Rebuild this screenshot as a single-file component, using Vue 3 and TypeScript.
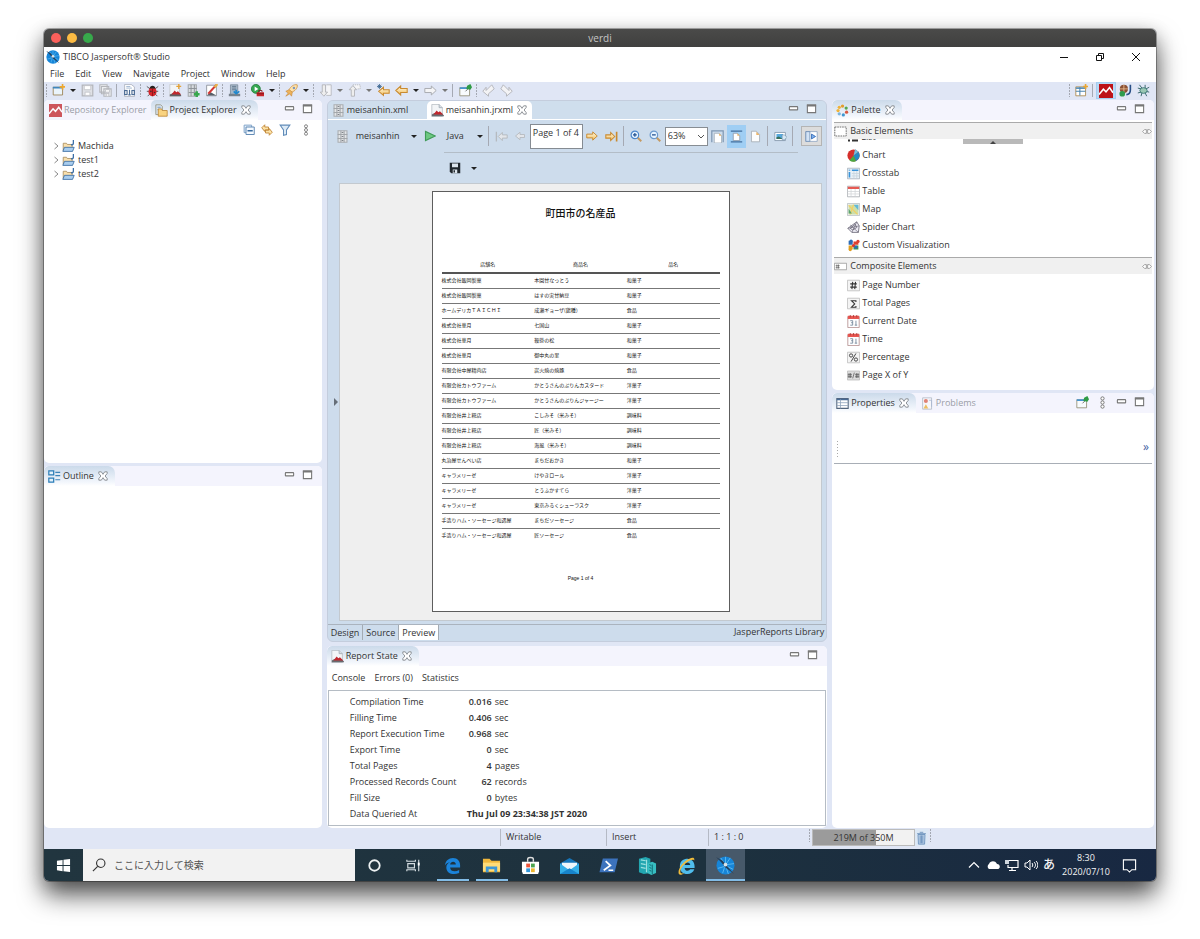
<script setup lang="ts">
import { ref } from 'vue'

interface ToolItem {
  kind: 'icon' | 'caret' | 'grip' | 'sep'
  icon?: string
  label?: string
  dim?: boolean
}
interface PaletteItem {
  icon: string
  label: string
}

const grip: ToolItem = { kind: 'grip' }
const sep: ToolItem = { kind: 'sep' }
const caret: ToolItem = { kind: 'caret' }
const dimCaret: ToolItem = { kind: 'caret', dim: true }
const tool = (icon: string, label: string): ToolItem => ({ kind: 'icon', icon, label })

const mainTools: ToolItem[] = [
  grip, tool('new', 'New'), caret, tool('save', 'Save'), tool('saveall', 'Save All'), sep,
  tool('binary', 'Build'), grip, tool('bug', 'Debug'), grip,
  tool('newreport', 'New report'), tool('serveradd', 'Add server'), tool('edit', 'Edit'), grip,
  tool('device', 'Deploy'), grip, tool('run', 'Run'), caret, grip,
  tool('rocket', 'Launch'), caret, grip,
  tool('annodown', 'Next annotation'), dimCaret, tool('annoup', 'Previous annotation'), dimCaret,
  tool('backstar', 'Last edit location'), tool('back', 'Back'), caret, tool('fwddim', 'Forward'), dimCaret, sep,
  tool('pin', 'Pin editor'), grip, tool('undo', 'Undo'), tool('redo', 'Redo'),
]

const menus = ['File', 'Edit', 'View', 'Navigate', 'Project', 'Window', 'Help']
const projects = ['Machida', 'test1', 'test2']

const basicItems: PaletteItem[] = [
  { icon: 'piechart', label: 'Chart' },
  { icon: 'crosstab', label: 'Crosstab' },
  { icon: 'table', label: 'Table' },
  { icon: 'map', label: 'Map' },
  { icon: 'spider', label: 'Spider Chart' },
  { icon: 'custom', label: 'Custom Visualization' },
]
const compositeItems: PaletteItem[] = [
  { icon: 'hash', label: 'Page Number' },
  { icon: 'sigma', label: 'Total Pages' },
  { icon: 'calendar', label: 'Current Date' },
  { icon: 'calendar', label: 'Time' },
  { icon: 'percent', label: 'Percentage' },
  { icon: 'xofy', label: 'Page X of Y' },
]

const products: [string, string, string][] = [
  ['株式会社飯岡製菓', '本園甘なっとう', '和菓子'],
  ['株式会社飯岡製菓', 'はすの実甘納豆', '和菓子'],
  ['ホームデリカＴＡＩＣＨＩ', '成瀬ギョーザ(鶏種）', '食品'],
  ['株式会社華月', '七国山', '和菓子'],
  ['株式会社華月', '鞍掛の松', '和菓子'],
  ['株式会社華月', '御中丸の里', '和菓子'],
  ['有限会社中屋精肉店', '炭火焼の焼豚', '食品'],
  ['有限会社カトウファーム', 'かとうさんのぷりんカスタード', '洋菓子'],
  ['有限会社カトウファーム', 'かとうさんのぷりんジャージー', '洋菓子'],
  ['有限会社井上糀店', 'こしみそ（米みそ）', '調味料'],
  ['有限会社井上糀店', '匠（米みそ）', '調味料'],
  ['有限会社井上糀店', '海風（米みそ）', '調味料'],
  ['丸治屋せんべい店', 'まちだおかき', '和菓子'],
  ['キャラメリーゼ', 'けやきロール', '洋菓子'],
  ['キャラメリーゼ', 'とうふかすてら', '洋菓子'],
  ['キャラメリーゼ', '東京みるくシューラスク', '洋菓子'],
  ['手造りハム・ソーセージ和遇屋', 'まちだソーセージ', '食品'],
  ['手造りハム・ソーセージ和遇屋', '匠ソーセージ', '食品'],
]

const stats: [string, string, string][] = [
  ['Compilation Time', '0.016', 'sec'],
  ['Filling Time', '0.406', 'sec'],
  ['Report Execution Time', '0.968', 'sec'],
  ['Export Time', '0', 'sec'],
  ['Total Pages', '4', 'pages'],
  ['Processed Records Count', '62', 'records'],
  ['Fill Size', '0', 'bytes'],
]

const tasks = [
  { icon: 'cortana', label: 'Cortana', state: '' },
  { icon: 'taskview', label: 'Task View', state: '' },
  { icon: 'edge', label: 'Edge', state: 'open' },
  { icon: 'explorer', label: 'File Explorer', state: 'open' },
  { icon: 'store', label: 'Store', state: '' },
  { icon: 'mail', label: 'Mail', state: '' },
  { icon: 'shell', label: 'PowerShell', state: '' },
  { icon: 'servers', label: 'Server Manager', state: '' },
  { icon: 'ie', label: 'Internet Explorer', state: '' },
  { icon: 'jasper', label: 'Jaspersoft Studio', state: 'active' },
]

const pageText = ref('Page 1 of 4')
const zoom = ref('63%')
const search = ref('')
const usedMemory = 219
const totalMemory = 350
</script>

<template>
  <div class="desktop">
    <svg class="sprite" aria-hidden="true">
      <linearGradient id="gold" x1="0" y1="0" x2="0" y2="1"><stop offset="0" stop-color="#fffbe6" /><stop offset="1" stop-color="#f2bd5c" /></linearGradient>
      <symbol id="jasper" viewBox="0 0 20 20"><circle cx="10" cy="10" r="9.500" fill="#1685d8" /><path d="M5 2l4 6M10 1v7M15 2l-4 6M2 13l7-2M19 8l-7 1M18 14l-6-3M13 19l-2-6M7 18l2-6" stroke="#5ab6ee" fill="none" /><path d="M0 1l7 4 5 6 7 8-9-7-5-6z" fill="#263e58" /><circle cx="10" cy="9" r="2" fill="#d9e4ea" /></symbol>
      <symbol id="close" viewBox="0 0 12 12"><path d="M1 1h3l2 3 2-3h3v2L8.500 6 11 9v2H8L6 8l-2 3H1V9l2.500-3L1 3z" fill="#fff" stroke="#7b7f85" /></symbol>
      <symbol id="min" viewBox="0 0 12 12"><rect x="1.500" y="4" width="9" height="3.500" rx=".5" fill="#fff" stroke="#777" stroke-width="1.200" /></symbol>
      <symbol id="max" viewBox="0 0 12 12"><path d="M1.500 2h9v8.500h-9z" fill="#fff" stroke="#777" stroke-width="1.200" /><path d="M1 3h10" stroke="#777" stroke-width="1.500" /></symbol>
      <symbol id="dots" viewBox="0 0 12 16"><g fill="#fff" stroke="#777" stroke-width="1.200"><circle cx="6" cy="3" r="2" /><circle cx="6" cy="8" r="2" /><circle cx="6" cy="13" r="2" /></g></symbol>
      <symbol id="new" viewBox="0 0 16 16"><path d="M1.500 4h11.500v9.500H1.500z" fill="#eaf4fb" stroke="#967b48" /><path d="M1 4.500h12" stroke="#3f86be" stroke-width="2" /><path d="M13 0v7M9.500 3.500h7" stroke="#eea82f" stroke-width="2" /></symbol>
      <symbol id="save" viewBox="0 0 16 16"><path d="M1.500 1.500h13v13h-13z" fill="#dfe1e6" stroke="#b4b6bb" stroke-width="1.500" /><path d="M4 2h8v5H4zM5 10h6v4H5z" fill="#fff" stroke="#c0c2c6" /></symbol>
      <symbol id="saveall" viewBox="0 0 16 16"><path d="M1 1h9v9H1zM3 3h9v9H3zM6 6h9v9H6z" fill="#eceef1" stroke="#b4b6bb" stroke-width="1.300" /><path d="M8 7h5v3H8zM9 12h3v3H9z" fill="#fff" stroke="#c0c2c6" /></symbol>
      <symbol id="binary" viewBox="0 0 16 16"><path d="M2 .5h8l4 3v12H2z" fill="#fff" stroke="#a9aebb" /><path d="M4 3h5M4 5h7" stroke="#8fa9c8" /><g fill="none" stroke="#4b6b95" stroke-width="1.400"><rect x="2" y="8" width="3" height="5" /><path d="M8 7v6M6.500 13.300h3" /><rect x="11" y="8" width="3" height="5" /></g></symbol>
      <symbol id="bug" viewBox="0 0 16 16"><path d="M1 3l4 3M1 9h14M2 15l4-4M15 3l-4 3M14 15l-4-4" stroke="#444" /><ellipse cx="8" cy="9.500" rx="5" ry="5.500" fill="#d6252b" /><path d="M4.500 5.500C4.500 1 11.500 1 11.500 5.500z" fill="#27211f" /><path d="M8 6v9" stroke="#8a1015" /><circle cx="6" cy="9" r="1" fill="#333" /><circle cx="10.500" cy="10.500" r="1" fill="#333" /></symbol>
      <symbol id="report" viewBox="0 0 16 16"><path d="M1 .5h9l4 4v11H1z" fill="#f3f5f7" stroke="#b6bcc3" /><path d="M10 .5v4h4" fill="#d8dfe6" stroke="#a0a9b2" /><path d="M1 15v-2l3-2h9l3 3v1z" fill="#696c71" /><path d="M3 13l4-5 2 2 2-1 4 4z" fill="#c1272d" /></symbol>
      <symbol id="newreport" viewBox="0 0 16 16"><path d="M1 .5h12v15H1z" fill="#f3f5f7" stroke="#c6c9cc" /><path d="M1 15v-2l4-2h8l2 3v1z" fill="#5e6166" /><path d="M3 13l4-5 2 2 2-1 4 4z" fill="#c1272d" /><path d="M12 0v6M9 3h6" stroke="#e5a236" stroke-width="1.600" /></symbol>
      <symbol id="server" viewBox="0 0 16 16"><path d="M2.500 1h11v14h-11z" fill="#e3e5e7" stroke="#aaaeb2" stroke-width="1.300" /><path d="M2 5.500h12M2 10.500h12M6 1v14M10 1v14" stroke="#a0a5a9" stroke-width="1.200" /><path d="M7 3h2M7 8h2M7 13h2" stroke="#60666c" /></symbol>
      <symbol id="serveradd" viewBox="0 0 16 16"><path d="M1.500 1h10v14h-10z" fill="#d9dde1" stroke="#a5a9ad" stroke-width="1.300" /><path d="M2 5.500h10M2 10.500h10M5 1v14M9 1v14" stroke="#8c9298" stroke-width="1.200" /><path d="M12 9v7M8.500 12.500h7" stroke="#37a74d" stroke-width="3" /></symbol>
      <symbol id="edit" viewBox="0 0 16 16"><path d="M2 1.500h12v13H2z" fill="#fff" stroke="#858b95" /><path d="M2 14l5-4 7 4z" fill="#575e68" /><path d="M14 1L4 12" stroke="#d13736" stroke-width="2.500" /><path d="M15 0l-3 4" stroke="#e6b04a" stroke-width="3" /></symbol>
      <symbol id="device" viewBox="0 0 16 16"><path d="M3 1h9v12H3z" fill="#a7b8c8" stroke="#7b8b9b" /><path d="M5 3h5M5 5h5M5 7h5" stroke="#5f748a" /><path d="M1 12h14v3H1z" fill="#78828c" /><path d="M10 7v5M7 9l3 3 4-3" stroke="#2188cd" stroke-width="2" fill="none" /></symbol>
      <symbol id="run" viewBox="0 0 16 16"><circle cx="6" cy="6" r="5.500" fill="#36a852" stroke="#207a39" /><path d="M4.500 3v6L9 6z" fill="#fff" /><path d="M7 10h9v5H7z" fill="#c9252b" /><path d="M9.500 10V8h4v2M7 12h9" stroke="#7f1519" fill="none" /></symbol>
      <symbol id="rocket" viewBox="0 0 16 16"><path d="M15 1C11 0 7 3 5 7l3 3c4-1 8-5 7-9z" fill="#ffe2a8" stroke="#cf9546" /><path d="M5 7L1 9l3 2-3 4 5-3 2 3 1-5z" fill="#efb459" stroke="#c98c3f" stroke-width=".8" /><circle cx="11" cy="5" r="1.500" fill="#8298b8" /></symbol>
      <symbol id="annodown" viewBox="0 0 16 16"><path d="M9 1h6v13H9" fill="#f5f5f7" stroke="#b3b5ba" /><path d="M4 1v9H1.500L6 15l4.500-5H8V1z" fill="#eee" stroke="#acaeb2" /></symbol>
      <symbol id="annoup" viewBox="0 0 16 16"><path d="M6 1h9v5h-4" fill="#f5f5f7" stroke="#b3b5ba" stroke-dasharray="1.500 1" /><path d="M4 15V7H1.500L6 2l4.500 5H8v8z" fill="#eee" stroke="#acaeb2" /></symbol>
      <symbol id="back" viewBox="0 0 16 16"><path d="M1 8l6-5.500v3h8v5H7v3z" fill="url(#gold)" stroke="#c98a30" stroke-width="1.300" /></symbol>
      <symbol id="backstar" viewBox="0 0 16 16"><path d="M2 9l6-5v3h7v4.500H8V14z" fill="url(#gold)" stroke="#c98a30" stroke-width="1.300" /><path d="M3 0v6M0 3h6M1 1l4 4M5 1L1 5" stroke="#35618c" /></symbol>
      <symbol id="fwd" viewBox="0 0 16 16"><path d="M15 8L9 2.500v3H1v5h8v3z" fill="url(#gold)" stroke="#c98a30" stroke-width="1.300" /></symbol>
      <symbol id="last" viewBox="0 0 16 16"><path d="M12 8L7 3v3H1v4h6v3z" fill="url(#gold)" stroke="#c98a30" stroke-width="1.300" /><path d="M14.300 2v12" stroke="#c98a30" stroke-width="2" /></symbol>
      <symbol id="fwddim" viewBox="0 0 16 16"><path d="M15 8L9 2.500v3H1v5h8v3z" fill="#f4f4f6" stroke="#a9abb0" stroke-width="1.200" /></symbol>
      <symbol id="backdim" viewBox="0 0 16 16"><path d="M2 8l6-5v3h6v4H8v3z" fill="#e3e6ea" stroke="#b5babf" stroke-width="1.200" /></symbol>
      <symbol id="firstdim" viewBox="0 0 16 16"><path d="M4 8l5-5v3h6v4H9v3z" fill="#e3e6ea" stroke="#b5babf" stroke-width="1.200" /><path d="M1.700 2v12" stroke="#b5babf" stroke-width="1.600" /></symbol>
      <symbol id="pin" viewBox="0 0 16 16"><path d="M1 4.500h12v10H1z" fill="#f8fbfd" stroke="#8e8a70" /><path d="M1 5h12" stroke="#4795d0" stroke-width="2" /><path d="M8 9l3-3" stroke="#555" /><path d="M10 2l4-2 2 4-2 3-5-1z" fill="#2f9b45" /></symbol>
      <symbol id="undo" viewBox="0 0 16 16"><path d="M12 1l3 5-7 6v3L1 9l4-5v4z" fill="#f3f3f5" stroke="#acaeb3" /></symbol>
      <symbol id="redo" viewBox="0 0 16 16"><path d="M4 1L1 6l7 6v3l7-6-4-5v4z" fill="#f3f3f5" stroke="#acaeb3" /></symbol>
      <symbol id="perspective" viewBox="0 0 16 16"><path d="M1 3.500h12v11H1z" fill="#fff" stroke="#a78244" /><path d="M1 5h12" stroke="#5e93bb" stroke-width="2" /><path d="M1 9h12M6 4v10" stroke="#4b85b0" stroke-width="1.300" /><path d="M13 0v6M10 3h6" stroke="#eaa633" stroke-width="2" /></symbol>
      <symbol id="repo" viewBox="0 0 16 16"><path d="M0 0h16v16H0z" fill="#bd1218" /><path d="M0 12l5-6 3 3 4-5 4 6" fill="none" stroke="#fff" stroke-width="1.800" /></symbol>
      <symbol id="java" viewBox="0 0 16 16"><circle cx="6" cy="6" r="5" fill="#8b5135" /><path d="M1 6h10M6 1v10" stroke="#efc195" /><circle cx="4" cy="12" r="3.500" fill="#2f9b4d" /><path d="M14 1v6c0 4-2 6-5 6" fill="none" stroke="#284f86" stroke-width="2" /></symbol>
      <symbol id="debug" viewBox="0 0 16 16"><path d="M1 5l4 1M3 1l3 4M10 1v4M15 4l-4 2M15 10l-4-1M12 15l-2-4M5 15l1-4M1 11l4-1" stroke="#3e6a70" stroke-width="1.200" /><ellipse cx="8" cy="8" rx="4.500" ry="3.500" fill="#9ac8b4" stroke="#2e6d6c" /></symbol>
      <symbol id="projtab" viewBox="0 0 16 16"><path d="M1 1h6l2 2v10H1z" fill="#dae7f4" stroke="#8f8f7c" /><path d="M3 4h4M3 7h3" stroke="#6a8db2" /><path d="M4 6h4l1 2h6v7H4z" fill="#f8d380" stroke="#bd8532" /></symbol>
      <symbol id="folder" viewBox="0 0 16 16"><path d="M1.500 13V4h4l1 1.500h6V13z" fill="#fae0ac" stroke="#a58a5c" /><path d="M1 14l2-5h12l-2 5z" fill="#a8cdef" stroke="#35699f" /><path d="M14 0v4c0 2-1 2-3 2" stroke="#3b6fa7" stroke-width="1.600" fill="none" /></symbol>
      <symbol id="collapse" viewBox="0 0 16 16"><path d="M1.500 1.500h10v10h-10z" fill="#e7f2fb" stroke="#7fa4c8" stroke-width="1.300" /><path d="M4 4h11v10H4z" fill="#f5faff" stroke="#6089b4" stroke-width="1.300" /><path d="M6 9h7" stroke="#34689e" stroke-width="2" /></symbol>
      <symbol id="link" viewBox="0 0 16 16"><path d="M1 5l4-4v3h5v4H5v2zM15 11l-4 4v-3H6V8h5V6z" fill="#fde3a7" stroke="#c18736" stroke-width="1.200" /></symbol>
      <symbol id="filter" viewBox="0 0 16 16"><path d="M1.500 1.500h13L10 8v6l-4 1V8z" fill="#dceaf6" stroke="#608bb8" stroke-width="1.400" /></symbol>
      <symbol id="outline" viewBox="0 0 16 16"><g fill="#e4f1fa" stroke="#2a7db8" stroke-width="1.500"><path d="M1 1h6v5H1zM1 10h6v5H1z" /></g><path d="M9 3h6M9 7h3M12 7h3M9 12h6" stroke="#3c83b7" stroke-width="1.500" /></symbol>
      <symbol id="palette" viewBox="0 0 16 16"><circle cx="8" cy="2.500" r="2" fill="#e39d2b" /><circle cx="12.500" cy="5" r="2" fill="#57a850" /><circle cx="13" cy="10" r="2" fill="#d85840" /><circle cx="9" cy="13.500" r="2" fill="#4098d1" /><circle cx="4" cy="12" r="2" fill="#7bb5de" /><circle cx="2.500" cy="8" r="2" fill="#efb23a" /><circle cx="4" cy="4" r="2" fill="#efb23a" /></symbol>
      <symbol id="props" viewBox="0 0 16 16"><path d="M1 2h14v12H1z" fill="#fff" stroke="#53657c" stroke-width="1.300" /><path d="M1 3h14" stroke="#486b96" stroke-width="2" /><path d="M5.500 3v11M1 7h14M1 10.500h14" stroke="#91a5bd" /></symbol>
      <symbol id="problems" viewBox="0 0 16 16"><path d="M2 1h11v14H2z" fill="#f6f6fa" stroke="#b3bac8" /><circle cx="6" cy="5" r="2.500" fill="#e08275" /><path d="M6 9l3 5H3z" fill="#edbe62" /><path d="M10 4h3v8" stroke="#a9b7d1" fill="none" /></symbol>
      <symbol id="play" viewBox="0 0 16 16"><path d="M2 2v12l13-6z" fill="#6dc881" stroke="#3f9a57" stroke-width="1.500" /></symbol>
      <symbol id="zoomin" viewBox="0 0 16 16"><path d="M10 10l5 5" stroke="#c59a62" stroke-width="2.600" /><circle cx="6.500" cy="6.500" r="5" fill="#e5f3ff" stroke="#4c86cc" stroke-width="1.600" /><path d="M4 6.500h5M6.500 4v5" stroke="#214f90" stroke-width="1.600" /></symbol>
      <symbol id="zoomout" viewBox="0 0 16 16"><path d="M10 10l5 5" stroke="#c59a62" stroke-width="2.600" /><circle cx="6.500" cy="6.500" r="5" fill="#e5f3ff" stroke="#6b99ce" stroke-width="1.600" /><path d="M4 6.500h5" stroke="#214f90" stroke-width="1.600" /></symbol>
      <symbol id="fitwidth" viewBox="0 0 16 16"><path d="M1 15V1h14v14" fill="none" stroke="#7d96b3" stroke-width="1.500" /><path d="M4 4h6l3 3v9H4z" fill="#fff" stroke="#9fabb7" /><path d="M10 4l3 3h-3z" fill="#eab367" /></symbol>
      <symbol id="fitpage" viewBox="0 0 16 16"><path d="M1 1.500h14M1 14.500h14" stroke="#436f9d" stroke-width="1.500" /><path d="M4 4h5l3 3v6H4z" fill="#fff" stroke="#8b98a7" /><path d="M9 4l3 3H9z" fill="#eab367" /></symbol>
      <symbol id="actual" viewBox="0 0 16 16"><path d="M3 1.500h6l4 4v9H3z" fill="#fbfcfd" stroke="#a3aab2" /><path d="M9 2l4 4H9z" fill="#eab367" /></symbol>
      <symbol id="image" viewBox="0 0 16 16"><path d="M1 3h13v10H1z" fill="#fff" stroke="#7f93a8" /><path d="M3 5h8v6H3z" fill="#57a9dc" /><path d="M3 11V9l3-1 5 3z" fill="#376f5c" /><path d="M10 6h3l3 3-3 3h-3z" fill="#d6e8f4" stroke="#6688a4" stroke-width=".7" /></symbol>
      <symbol id="panel" viewBox="0 0 16 16"><path d="M1 2h14v12H1z" fill="#fff" stroke="#8da3c0" /><path d="M1 2h5v12H1z" fill="#d3e3f6" stroke="#6e8cb3" /><path d="M8 5v6l5-3z" fill="#7fb0ee" stroke="#3068b3" /></symbol>
      <symbol id="disk" viewBox="0 0 16 16"><path d="M1 1h14v14H3l-2-2z" fill="#20272d" /><path d="M4 2h8v5H4zM5 10h6v5H5z" fill="#dce5ed" /><path d="M6 11h2v3H6z" fill="#20272d" /></symbol>
      <symbol id="marquee" viewBox="0 0 16 16"><path d="M1 2.500h14v11H1z" fill="#fff" stroke="#555" stroke-dasharray="2 1" /></symbol>
      <symbol id="comp" viewBox="0 0 16 16"><path d="M.5 4h15v8H.5z" fill="#fff" stroke="#999" /><path d="M2 7h5M2 9.500h5M3.500 5.500v5M5.500 5.500v5" stroke="#555" stroke-width=".8" /></symbol>
      <symbol id="piechart" viewBox="0 0 16 16"><circle cx="8" cy="8" r="7.500" fill="#d52f2b" /><path d="M8 8l6-4.500A7.500 7.500 0 0 1 11 15z" fill="#238bc2" /><path d="M8 8l3 7a7.500 7.500 0 0 1-8-1z" fill="#4ba941" /><path d="M8 8l2-8 4 3.500z" fill="#71c1df" /></symbol>
      <symbol id="crosstab" viewBox="0 0 16 16"><path d="M.5 1.500h15v13H.5z" fill="#e8f1f7" stroke="#a5b0ba" /><path d="M6 3h8v2H6zM2 6h2v7H2z" fill="#3993d8" /><path d="M2 3h2v2H2z" fill="#7ab8e6" /><path d="M6 8h9M6 11h9M8.500 5v9M12 5v9" stroke="#c8d5df" /></symbol>
      <symbol id="table" viewBox="0 0 16 16"><path d="M.5 1.500h15v13H.5z" fill="#fff" stroke="#a7abb0" /><path d="M1 2h14v3H1z" fill="#e65a53" /><path d="M1 8h14M1 11h14M5 5v9M10 5v9" stroke="#d5d8da" /></symbol>
      <symbol id="map" viewBox="0 0 16 16"><path d="M.5 .5h15v15H.5z" fill="#f0f2f2" stroke="#b6bfc1" /><path d="M2 2h12v12H2z" fill="#cddfa8" /><path d="M8 2h6v7z" fill="#62b9d7" /><path d="M2 3l11 11M4 14l4-12" stroke="#f4cf63" stroke-width="1.500" /><path d="M2 7l4 6H2z" fill="#5ca373" /></symbol>
      <symbol id="spider" viewBox="0 0 16 16"><path d="M12 1l3 5-1 8-8 0-5-5zM10 4l2 4-5 3-3-2z" fill="#eeedf5" stroke="#686474" /><path d="M12 1L6 14M1 9l14-3M14 14L4 5" stroke="#686474" stroke-width=".8" /></symbol>
      <symbol id="custom" viewBox="0 0 16 16"><path d="M2 2h5v5H2z" fill="#2e6cb5" /><path d="M8 3h6v4H8z" fill="#db412f" /><path d="M2 8h5v5H2z" fill="#e09e20" /><path d="M8 8h6v5H8z" fill="#3e9a48" /><circle cx="5" cy="2.500" r="2" fill="#2e6cb5" /><circle cx="13.500" cy="3" r="2" fill="#db412f" /><circle cx="8" cy="8" r="2" fill="#d93730" /><circle cx="11" cy="10" r="2" fill="#286dba" /><circle cx="4" cy="13" r="2" fill="#e09e20" /></symbol>
      <symbol id="hash" viewBox="0 0 16 16"><path d="M.5 1.500h15v13H.5z" fill="#f4f4f4" stroke="#bbb" /><path d="M4 6h8M4 10h8M7 3.500L6 12.500M10.500 3.500l-1 9" stroke="#333" stroke-width="1.300" /></symbol>
      <symbol id="sigma" viewBox="0 0 16 16"><path d="M.5 1.500h15v13H.5z" fill="#f4f4f4" stroke="#bbb" /><path d="M11 6V4.500H5.500l4 4-4 4H11V11" fill="none" stroke="#333" stroke-width="1.300" /></symbol>
      <symbol id="calendar" viewBox="0 0 16 16"><path d="M1 2h14v13.500H1z" fill="#fff" stroke="#b08a8a" /><path d="M1 1h14v4H1z" fill="#e85752" /><path d="M4 0v3M8 0v3M12 0v3" stroke="#a83b38" /><path d="M4 7h3v5.500H4M5 9.500h2M11 7v5.500M9.500 12.500h3" fill="none" stroke="#6a7f94" /></symbol>
      <symbol id="percent" viewBox="0 0 16 16"><path d="M.5 1.500h15v13H.5z" fill="#f4f4f4" stroke="#bbb" /><path d="M11 3l-6 10" stroke="#444" stroke-width="1.200" /><g fill="none" stroke="#444" stroke-width="1.200"><circle cx="5" cy="5.500" r="2" /><circle cx="11" cy="10.500" r="2" /></g></symbol>
      <symbol id="xofy" viewBox="0 0 16 16"><path d="M.5 2.500h15v11H.5z" fill="#ddd" stroke="#bbb" /><path d="M1 7h5M1 9.500h5M2.500 5v6M4.500 5v6M9 4.500L7 11.500M10 7h5M10 9.500h5M11.500 5v6M13.500 5v6" stroke="#555" stroke-width=".9" /></symbol>
      <symbol id="drawer" viewBox="0 0 16 10"><path d="M7 2H4L1 5l3 3h3zM9 2h3l3 3-3 3H9z" fill="#fff" stroke="#888" stroke-width="1.200" /></symbol>
      <symbol id="trash" viewBox="0 0 12 16"><path d="M2 4h8l-.5 11h-7z" fill="#bcd2e9" stroke="#6a90bb" /><path d="M1 3h10M4 1.500h4M4.500 5v9M6 5v9M7.500 5v9" stroke="#6a90bb" /></symbol>
      <symbol id="windows" viewBox="0 0 16 16"><path d="M1 3l6-1v5.500H1zM8 1.800L15 1v6.500H8zM1 8.500h6V14l-6-1zM8 8.500h7V15l-7-.8z" fill="#fff" /></symbol>
      <symbol id="lens" viewBox="0 0 16 16"><circle cx="10" cy="6" r="4.800" fill="none" stroke="#333" stroke-width="1.300" /><path d="M6.500 9.500L1 15" stroke="#333" stroke-width="1.300" /></symbol>
      <symbol id="cortana" viewBox="0 0 20 20"><circle cx="10" cy="10" r="5.500" fill="none" stroke="#edf1f2" stroke-width="1.900" /></symbol>
      <symbol id="taskview" viewBox="0 0 20 20"><path d="M3 4v1.500h9V4M3 16v-1.500h9V16M4 8h7v4.500H4zM15.500 4v12" fill="none" stroke="#d5dde1" stroke-width="1.200" /><path d="M14.500 7h2v3h-2z" fill="#fff" /></symbol>
      <symbol id="edge" viewBox="0 0 20 20"><path d="M2 10C2.500 5 6 2 10.500 2c5 0 7.500 3.500 7.500 7.500v2.500H7.500c.2 4.500 5.500 5 9.500 2.700V18C10 20.500 3.500 18 3.500 12c0-3 1.500-4.500 4-5.500C4.500 7 2.700 8.200 2 10zM7.500 9h6c0-4-5.500-4-6 0z" fill="#1b83da" /></symbol>
      <symbol id="explorer" viewBox="0 0 20 20"><path d="M1 3h7l2 2h9v12H1z" fill="#efb73d" /><path d="M1 7h18v9H1z" fill="#ffdc78" /><path d="M4 17v-6h12v6h-3v-3H7v3z" fill="#3d97d6" /></symbol>
      <symbol id="store" viewBox="0 0 20 20"><path d="M7 6V3.500C7 1 13 1 13 3.500V6" fill="none" stroke="#ddd" stroke-width="1.500" /><path d="M1 6h18v10l-1 3H2l-1-3z" fill="#fff" /><path d="M5.500 8h4v4h-4z" fill="#ed553a" /><path d="M10.500 8h4v4h-4z" fill="#4ba44e" /><path d="M5.500 13h4v4h-4z" fill="#3298dc" /><path d="M10.500 13h4v4h-4z" fill="#edb731" /></symbol>
      <symbol id="mail" viewBox="0 0 20 20"><path d="M0 8l10-6 10 6v11H0z" fill="#1675ba" /><path d="M2 7h16v4l-8 5-8-5z" fill="#eef6fb" /><path d="M0 8l10 7 10-7v11H0z" fill="#35afe8" /><path d="M0 19l10-6 10 6z" fill="#1784cb" /></symbol>
      <symbol id="shell" viewBox="0 0 20 20"><path d="M4 2.500h16L16.500 17H.5z" fill="#3c73bd" /><path d="M7 5.500l5 4.500-7 5M10 15h5" fill="none" stroke="#fff" stroke-width="1.800" /></symbol>
      <symbol id="servers" viewBox="0 0 20 20"><path d="M1 3l7-2 5 2v15l-7 1-5-2z" fill="#23a6b0" /><path d="M3 4l5 1M3 8l5 1M3 12l5 1M9 4v13" stroke="#9be0df" stroke-width="1.300" /><path d="M10 8l5-2 4 2v10l-5 2-4-2z" fill="#37bec2" /><path d="M12 9l2 1M12 12l2 1M12 15l2 1M15 9v10" stroke="#116671" /></symbol>
      <symbol id="ie" viewBox="0 0 20 20"><path d="M3 11C3 5 7 3 11 3s7.500 3 7.500 8v1.500H8c.5 4 5 3.500 5.800 1.500h4.500c-1.500 3.500-4 5-7.300 5-5 0-8-3-8-8zm5-1.500h6c-.5-3.500-5.500-3.500-6 0z" fill="#50bdec" /><path d="M2 19C0 15 6 6 13 3c4-2 6-1 5 2 0-1.500-2-1.500-5 0C6 9 2 15 4 18c1 1 3 0 4-.5C6 19.500 3 20.500 2 19z" fill="#f1bd3c" /></symbol>
    </svg>

    <div class="window">
      <header class="titlebar">
        <span class="lights"><i class="red"></i><i class="yellow"></i><i class="green"></i></span>
        <span class="host">verdi</span>
      </header>

      <div class="apptitle">
        <svg class="i14"><use href="#jasper" /></svg>
        <h1>TIBCO Jaspersoft® Studio</h1>
        <div class="winbtns">
          <button aria-label="Minimize"><svg viewBox="0 0 10 10"><path d="M1 5.500h8" stroke="#111" /></svg></button>
          <button aria-label="Restore"><svg viewBox="0 0 10 10"><path d="M1.500 3.500h5v5h-5zM3.500 3V1.500h5v5H7" fill="none" stroke="#111" /></svg></button>
          <button aria-label="Close"><svg viewBox="0 0 10 10"><path d="M1 1l8 8M9 1L1 9" stroke="#111" /></svg></button>
        </div>
      </div>

      <nav class="menubar">
        <button v-for="m in menus" :key="m">{{ m }}</button>
      </nav>

      <div class="toolbar">
        <template v-for="(t, n) in mainTools" :key="n">
          <button v-if="t.kind === 'icon'" class="tool" :aria-label="t.label"><svg class="i13"><use :href="'#' + t.icon" /></svg></button>
          <span v-else-if="t.kind === 'caret'" class="caretcell"><i class="caret" :class="{ dim: t.dim }"></i></span>
          <i v-else :class="t.kind"></i>
        </template>
        <span class="grow"></span>
        <i class="grip"></i>
        <button class="tool" aria-label="Open Perspective"><svg class="i13"><use href="#perspective" /></svg></button>
        <i class="sep"></i>
        <button class="tool on" aria-label="Report Design"><svg class="i14"><use href="#repo" /></svg></button>
        <button class="tool" aria-label="Java"><svg class="i13"><use href="#java" /></svg></button>
        <button class="tool" aria-label="Debug perspective"><svg class="i13"><use href="#debug" /></svg></button>
      </div>

      <main class="workbench">
        <div class="col side">
          <section class="panel">
            <div class="tabs">
              <button class="tab off"><svg class="i13 faded"><use href="#repo" /></svg>Repository Explorer</button>
              <button class="tab sel"><svg class="i13"><use href="#projtab" /></svg>Project Explorer<svg class="x"><use href="#close" /></svg></button>
              <span class="ctl"><svg><use href="#min" /></svg><svg><use href="#max" /></svg></span>
            </div>
            <div class="viewbar">
              <button aria-label="Collapse All"><svg class="i12"><use href="#collapse" /></svg></button>
              <button aria-label="Link with Editor"><svg class="i12"><use href="#link" /></svg></button>
              <button aria-label="Filter"><svg class="i12"><use href="#filter" /></svg></button>
              <button class="more" aria-label="View Menu"><svg class="i12"><use href="#dots" /></svg></button>
            </div>
            <ul class="tree">
              <li v-for="p in projects" :key="p">
                <svg class="chev" viewBox="0 0 6 8"><path d="M1.500 1L5 4 1.500 7" fill="none" stroke="#888" /></svg>
                <svg class="i13"><use href="#folder" /></svg><span>{{ p }}</span>
              </li>
            </ul>
          </section>
          <section class="panel">
            <div class="tabs">
              <button class="tab sel"><svg class="i13"><use href="#outline" /></svg>Outline<svg class="x"><use href="#close" /></svg></button>
              <span class="ctl"><svg><use href="#min" /></svg><svg><use href="#max" /></svg></span>
            </div>
          </section>
        </div>

        <div class="col center">
          <section class="editor">
            <div class="tabs">
              <button class="tab file"><svg class="i13"><use href="#server" /></svg>meisanhin.xml</button>
              <button class="tab front"><svg class="i13"><use href="#report" /></svg>meisanhin.jrxml<svg class="x"><use href="#close" /></svg></button>
              <span class="ctl"><svg><use href="#min" /></svg><svg><use href="#max" /></svg></span>
            </div>
            <div class="previewbar">
              <svg class="i13 source"><use href="#server" /></svg>
              <button class="pick adapter">meisanhin<i class="caret"></i></button>
              <button class="tool" aria-label="Run report"><svg class="i12"><use href="#play" /></svg></button>
              <button class="pick lang">Java<i class="caret"></i></button>
              <i class="sep tall"></i>
              <button class="tool" aria-label="First page"><svg class="i13"><use href="#firstdim" /></svg></button>
              <button class="tool" aria-label="Previous page"><svg class="i12"><use href="#backdim" /></svg></button>
              <input v-model="pageText" class="pagebox" aria-label="Page">
              <button class="tool" aria-label="Next page"><svg class="i12"><use href="#fwd" /></svg></button>
              <button class="tool" aria-label="Last page"><svg class="i13"><use href="#last" /></svg></button>
              <i class="sep tall"></i>
              <button class="tool" aria-label="Zoom in"><svg class="i12"><use href="#zoomin" /></svg></button>
              <button class="tool" aria-label="Zoom out"><svg class="i12"><use href="#zoomout" /></svg></button>
              <span class="zoom">
                <select v-model="zoom" aria-label="Zoom level"><option>63%</option><option>100%</option></select>
                <svg viewBox="0 0 8 6"><path d="M1 1l3 3 3-3" fill="none" stroke="#555" /></svg>
              </span>
              <button class="tool" aria-label="Fit width"><svg class="i13"><use href="#fitwidth" /></svg></button>
              <button class="tool fit" aria-label="Fit page"><svg class="i13"><use href="#fitpage" /></svg></button>
              <button class="tool" aria-label="Actual size"><svg class="i13"><use href="#actual" /></svg></button>
              <i class="sep tall"></i>
              <button class="tool" aria-label="Export image"><svg class="i13"><use href="#image" /></svg></button>
              <i class="sep tall"></i>
              <button class="tool raised" aria-label="Toggle parameters"><svg class="i13"><use href="#panel" /></svg></button>
            </div>
            <div class="savebar">
              <button class="tool" aria-label="Save as"><svg class="i12"><use href="#disk" /></svg></button>
              <i class="caret"></i>
            </div>
            <div class="stage">
              <svg class="sash" viewBox="0 0 6 8" preserveAspectRatio="xMaxYMid"><path d="M1 0l4 4-4 4z" fill="#666e78" /></svg>
              <div class="canvas">
                <article class="sheet">
                  <h2>町田市の名産品</h2>
                  <table>
                    <thead><tr><th>店舗名</th><th>商品名</th><th>品名</th></tr></thead>
                    <tbody>
                      <tr v-for="(r, n) in products" :key="n"><td v-for="c in r" :key="c">{{ c }}</td></tr>
                    </tbody>
                  </table>
                  <p>Page 1 of 4</p>
                </article>
              </div>
            </div>
            <div class="modes">
              <button>Design</button><button>Source</button><button class="cur">Preview</button>
              <span>JasperReports Library</span>
            </div>
          </section>

          <section class="panel state">
            <div class="tabs">
              <button class="tab sel"><svg class="i13"><use href="#report" /></svg>Report State<svg class="x"><use href="#close" /></svg></button>
              <span class="ctl"><svg><use href="#min" /></svg><svg><use href="#max" /></svg></span>
            </div>
            <div class="subtabs"><button>Console</button><button>Errors (0)</button><button>Statistics</button></div>
            <div class="statbox">
              <table>
                <tbody>
                  <tr v-for="s in stats" :key="s[0]"><th scope="row">{{ s[0] }}</th><td class="num">{{ s[1] }}</td><td>{{ s[2] }}</td></tr>
                  <tr><th scope="row">Data Queried At</th><td class="when" colspan="2">Thu Jul 09 23:34:38 JST 2020</td></tr>
                </tbody>
              </table>
            </div>
          </section>
        </div>

        <div class="col right">
          <section class="panel">
            <div class="tabs">
              <button class="tab sel"><svg class="i13"><use href="#palette" /></svg>Palette<svg class="x"><use href="#close" /></svg></button>
              <span class="ctl"><svg><use href="#min" /></svg><svg><use href="#max" /></svg></span>
            </div>
            <div class="drawers">
              <h3><svg class="i13"><use href="#marquee" /></svg>Basic Elements<svg class="drawer"><use href="#drawer" /></svg></h3>
              <div class="clip">
                <div class="element"><svg class="i12" viewBox="0 0 12 12"><path d="M1 9.500h2M5 9.500h6" stroke="#333" stroke-width="2" /></svg>List</div>
                <button class="scroller" aria-label="Scroll up"><svg viewBox="0 0 6 4"><path d="M0 4l3-3 3 3z" fill="#444" /></svg></button>
              </div>
              <div v-for="e in basicItems" :key="e.label" class="element"><svg class="i13"><use :href="'#' + e.icon" /></svg>{{ e.label }}</div>
              <h3 class="second"><svg class="i13"><use href="#comp" /></svg>Composite Elements<svg class="drawer"><use href="#drawer" /></svg></h3>
              <div v-for="e in compositeItems" :key="e.label" class="element"><svg class="i13"><use :href="'#' + e.icon" /></svg>{{ e.label }}</div>
            </div>
          </section>
          <section class="panel">
            <div class="tabs">
              <button class="tab sel"><svg class="i13"><use href="#props" /></svg>Properties<svg class="x"><use href="#close" /></svg></button>
              <button class="tab off"><svg class="i13"><use href="#problems" /></svg>Problems</button>
              <span class="ctl"><svg class="wide"><use href="#pin" /></svg><svg class="wide"><use href="#dots" /></svg><svg><use href="#min" /></svg><svg><use href="#max" /></svg></span>
            </div>
            <div class="propbar"><i class="dotline"></i><button aria-label="More">»</button></div>
          </section>
        </div>
      </main>

      <footer class="status">
        <span class="grow"></span>
        <span class="cell">Writable</span>
        <span class="cell mode">Insert</span>
        <span class="cell pos">1 : 1 : 0</span>
        <i class="grip"></i>
        <span class="heap"><i :style="{ width: (usedMemory / totalMemory) * 100 + '%' }"></i><b>{{ usedMemory }}M of {{ totalMemory }}M</b></span>
        <button class="gc" aria-label="Run garbage collector"><svg><use href="#trash" /></svg></button>
        <i class="grip"></i>
        <span class="tail"></span>
      </footer>

      <div class="taskbar">
        <button class="start" aria-label="Start"><svg class="i15"><use href="#windows" /></svg></button>
        <label class="search"><svg class="i14"><use href="#lens" /></svg><input v-model="search" aria-label="検索" placeholder="ここに入力して検索"></label>
        <button v-for="t in tasks" :key="t.icon" class="task" :class="t.state" :aria-label="t.label"><svg><use :href="'#' + t.icon" /></svg></button>
        <span class="grow"></span>
        <div class="tray">
          <svg viewBox="0 0 14 14"><path d="M2 9.500L7 4.500l5 5" fill="none" stroke="#fff" stroke-width="1.200" /></svg>
          <svg viewBox="0 0 14 14"><path d="M3 11a3 3 0 0 1 0-5c1-3 6-4 8 0 3 0 4 4 1 5z" fill="#fff" /></svg>
          <svg viewBox="0 0 14 14"><path d="M4 2.500h9v7H3V7M7 10v2M4 12.500h7" fill="none" stroke="#fff" stroke-width="1.200" /><path d="M0 2h4v4H0z" fill="#cfd6dd" /></svg>
          <svg viewBox="0 0 14 14"><path d="M1 5v4h2l3 3V2L3 5zM8 5c1 1 1 3 0 4M10 4c2 2 2 4 0 6M12 3c2.500 2.500 2.500 5.500 0 8" fill="none" stroke="#fff" /></svg>
          <span class="ime">あ</span>
        </div>
        <div class="clock"><span>8:30</span><span>2020/07/10</span></div>
        <button class="notif" aria-label="Notifications"><svg viewBox="0 0 16 16"><path d="M1.500 2h13v10.500h-4L8 15l-2.500-2.500h-4z" fill="none" stroke="#fff" stroke-width="1.200" /></svg></button>
        <i class="peek"></i>
      </div>
    </div>
  </div>
</template>

<style>
html, body { background: #fff; }
</style>

<style scoped>
* { box-sizing: border-box; }
.desktop {
  min-height: 100vh; display: flex; padding: 29px 44px 58px;
  font: 9px/14px "Open Sans", "Noto Sans CJK JP", sans-serif; color: #333; overflow: hidden;
}
.sprite { position: absolute; width: 0; height: 0; }
svg { flex: none; display: block; }
i { display: block; flex: none; }
button { font: inherit; color: inherit; background: none; border: 0; padding: 0; margin: 0; white-space: nowrap; }
input, select { font: inherit; color: inherit; margin: 0; }
h1, h2, h3, p, ul { margin: 0; padding: 0; font-weight: 400; font-size: inherit; }
.i12 { width: 12px; height: 12px; }
.i13 { width: 13px; height: 13px; }
.i14 { width: 14px; height: 14px; }
.i15 { width: 15px; height: 15px; }
.grow { flex: 1; }
.window {
  flex: 1; min-width: 0; display: flex; flex-direction: column; background: #e0e6f5; border-radius: 5px; overflow: hidden;
  box-shadow: 0 0 0 1px rgba(0, 0, 0, .3), 0 14px 26px rgba(0, 0, 0, .65), 0 4px 18px rgba(0, 0, 0, .2);
}
.titlebar { height: 18px; background: linear-gradient(#4a4a49, #40403f); display: flex; align-items: center; justify-content: center; position: relative; }
.lights { position: absolute; left: 7px; display: flex; gap: 6px; }
.lights i { width: 10px; height: 10px; border-radius: 50%; }
.red { background: #fb605b; }
.yellow { background: #fcbb43; }
.green { background: #37a94b; }
.host { font-size: 10px; color: #c6c6c6; }
.apptitle { height: 19px; background: #fff; display: flex; align-items: center; gap: 3px; padding-left: 2px; }
.winbtns { margin-left: auto; display: flex; padding-right: 2px; }
.winbtns button { width: 36px; height: 18px; display: grid; place-items: center; }
.winbtns svg { width: 10px; height: 10px; }
.menubar { height: 16px; background: #fff; display: flex; gap: 11px; padding-left: 6px; align-items: center; }
.toolbar { height: 17px; display: flex; align-items: center; padding-right: 4px; }
.tool { width: 18px; height: 17px; display: grid; place-items: center; flex: none; }
.tool.on { background: #b7d8f4; border: 1px solid #a5cdf0; width: 20px; }
.caretcell { width: 11px; display: grid; place-items: center; }
.caret { width: 0; height: 0; border: 3px solid transparent; border-top: 3px solid #222; border-bottom: 0; }
.caret.dim { border-top-color: #777; }
.grip { width: 5px; height: 13px; background: linear-gradient(#a4a8b2, #a4a8b2) 2px 0 / 1px 100% no-repeat; -webkit-mask: repeating-linear-gradient(#000 0 2px, transparent 2px 3px); mask: repeating-linear-gradient(#000 0 2px, transparent 2px 3px); }
.sep { width: 6px; height: 13px; background: linear-gradient(90deg, transparent 2px, #a5a9b3 2px, #a5a9b3 3px, transparent 3px); }
.sep.tall { height: 20px; }

.workbench { flex: 1; min-height: 0; display: grid; grid-template-columns: 278fr 501fr 322fr; gap: 5px; padding: 1px 2px 0 0; }
.col { display: grid; gap: 3px; min-width: 0; min-height: 0; }
.side { grid-template-rows: 363fr 362fr; }
.center { grid-template-rows: 1fr auto; gap: 4px; }
.right { grid-template-rows: auto 1fr; }
.panel { background: #fff; border-radius: 5px; overflow: hidden; display: flex; flex-direction: column; min-width: 0; }
.tabs { height: 20px; flex: none; display: flex; background: #f4f4fd; position: relative; }
.tab { display: flex; align-items: center; gap: 2px; padding: 0 4px; height: 20px; }
.tab.off { color: #9a9da6; padding-left: 5px; }
.tab.sel { background: linear-gradient(#cbdaea, #f2f6fc 80%, #fff); border-radius: 5px 7px 0 0; padding-right: 7px; }
.faded { opacity: .7; }
.x { width: 10px; height: 10px; margin-left: 2px; }
.ctl { margin-left: auto; display: flex; gap: 7px; padding: 3px 9px 0 0; }
.ctl svg { width: 11px; height: 11px; }
.ctl .wide { width: 13px; height: 13px; }
.viewbar { display: flex; justify-content: flex-end; gap: 6px; padding: 4px 10px 3px 0; }
.viewbar .more { margin-left: 3px; }
.tree { list-style: none; }
.tree li { display: flex; align-items: center; height: 14px; padding-left: 9px; gap: 3px; }
.chev { width: 6px; height: 8px; }

.editor { background: #cddcec; border-radius: 6px; border: 1px solid #c4cddd; display: flex; flex-direction: column; min-width: 0; overflow: hidden; }
.editor .tabs { background: #cfdeed; border-bottom: 1px solid #fff; height: 19px; }
.editor .tab { height: 18px; }
.tab.file { width: 99px; }
.editor .tab.front { background: #fff; border-radius: 5px 5px 0 0; padding-right: 5px; }
.editor .ctl { padding-top: 2px; }
.previewbar { height: 32px; display: flex; align-items: center; padding: 0 4px 0 8px; }
.previewbar .tool { width: 19px; }
.source { margin-right: 7px; }
.pick { display: flex; align-items: center; justify-content: space-between; }
.adapter { width: 61px; margin-right: 4px; }
.lang { width: 36px; margin: 0 3px 0 7px; }
.pagebox { width: 53px; height: 25px; border: 1px solid #858b92; background: #fff; padding: 0 2px 8px; outline: 0; flex: none; }
.zoom { position: relative; display: flex; flex: none; }
.zoom select { appearance: none; width: 43px; height: 19px; border: 1px solid #878d93; border-radius: 0; background: #fff; padding: 0 2px; }
.zoom svg { position: absolute; right: 3px; top: 7px; width: 8px; height: 6px; }
.fit { background: #9fcef4; height: 23px; }
.previewbar .raised { background: #dcdcdc; border: 1px solid #b4b4b4; height: 20px; margin-left: auto; width: 21px; }
.savebar { height: 31px; margin: 0 28px 0 116px; border-top: 1px solid #b3bdc7; display: flex; align-items: center; gap: 5px; }
.savebar .tool { width: 22px; }
.stage { flex: 1; min-height: 0; display: flex; align-items: stretch; padding-right: 4px; }
.sash { width: 11px; height: 8px; align-self: center; }
.canvas { flex: 1; background: #efefef; border: 1px solid #c3c9cf; padding: 7px 0 8px; display: flex; justify-content: center; align-items: flex-start; }
.sheet { width: 298px; min-height: 421px; background: #fff; border: 1px solid #5d5d5d; padding: 13px 9px 0; font: 5px/8px "Noto Sans CJK JP", "Liberation Sans", sans-serif; color: #111; }
.sheet h2 { font-size: 10px; line-height: 16px; font-weight: 500; text-align: center; }
.sheet table { width: 100%; table-layout: fixed; border-collapse: collapse; margin-top: 36px; }
.sheet th, .sheet td { height: 15px; padding: 0 0 1px; font-weight: 400; white-space: nowrap; text-align: left; border-bottom: 1px solid #777; }
.sheet th { height: 16px; text-align: center; border-bottom: 2px solid #555; }
.sheet tbody tr:last-child td { border-bottom: 0; }
.sheet p { text-align: center; margin-top: 31px; font-family: "Liberation Sans", sans-serif; }
.modes { height: 16px; display: flex; align-items: stretch; margin-top: 3px; margin-bottom: 1px; border-top: 1px solid #aab3be; line-height: 14px; }
.modes button { padding: 0 3px; border-right: 1px solid #a3abb4; }
.modes .cur { background: #fff; }
.modes span { margin-left: auto; padding-right: 2px; }

.subtabs { height: 24px; display: flex; align-items: center; gap: 9px; padding-left: 5px; }
.statbox { border: 1px solid #b5bcc4; margin: 0 1px 2px; padding: 3px 0 3px 21px; }
.statbox table { border-collapse: collapse; }
.statbox th, .statbox td { height: 16px; padding: 0; font-weight: 400; text-align: left; }
.statbox th { width: 117px; }
.statbox .num { width: 28px; padding-right: 3px; text-align: right; font-weight: 600; }
.statbox .when { font-weight: 700; }

.drawers { padding: 2px 2px 6px; }
.drawers h3 { height: 17px; display: flex; align-items: center; gap: 3px; background: #f0f0f0; border-top: 1px solid #aaa; }
.drawers .second { margin: 3px 0 2px; }
.drawer { width: 10px; height: 7px; margin-left: auto; }
.element { height: 18px; display: flex; align-items: center; gap: 2px; padding-left: 13px; }
.clip { height: 7px; display: flex; align-items: flex-end; overflow: hidden; position: relative; }
.scroller { position: absolute; left: 50%; transform: translateX(-50%); top: 0; width: 60px; height: 5px; background: #b9b9b9; display: grid; place-items: center; }
.scroller svg { width: 6px; height: 4px; }
.propbar { height: 51px; border-bottom: 1px solid #a8aeb6; margin: 0 2px; display: flex; align-items: flex-end; justify-content: space-between; padding: 0 3px 5px; }
.propbar button { color: #3f5ea0; font-size: 12px; line-height: 22px; }
.dotline { width: 1px; height: 17px; background: repeating-linear-gradient(#aaa 0 1px, transparent 1px 3px); }

.status { height: 21px; display: flex; align-items: flex-start; padding-top: 1px; }
.cell { width: 106px; height: 17px; line-height: 15px; border-left: 1px solid #b5bac5; padding-left: 5px; }
.cell.mode { width: 102px; }
.cell.pos { width: 99px; }
.heap { position: relative; width: 103px; height: 17px; background: #f2f2f2; border: 1px solid #bbb; text-align: center; line-height: 16px; }
.heap i { position: absolute; left: 0; top: 0; bottom: 0; background: #9b9b9b; }
.heap b { position: relative; font-weight: 400; }
.gc { width: 13px; height: 17px; display: grid; place-items: center; background: #dce8f5; }
.gc svg { width: 11px; height: 14px; }
.tail { width: 223px; }

.taskbar { height: 32px; display: flex; background: linear-gradient(90deg, #21353f, #1d313e 60%, #182842); color: #f5f5f5; }
.start { width: 39px; display: grid; place-items: center; }
.search { width: 272px; background: #f2f2f2; display: flex; align-items: center; padding-left: 9px; gap: 8px; }
.search input { border: 0; background: none; outline: 0; padding: 0; flex: 1; min-width: 0; font-size: 10px; color: #444; }
.search input::placeholder { color: #505050; opacity: 1; }
.task { width: 39px; display: grid; place-items: center; }
.task svg { width: 19px; height: 19px; }
.task.open { background: linear-gradient(#82bce6, #82bce6) center bottom / 32px 2px no-repeat; }
.task.active { background: linear-gradient(#82bce6, #82bce6) center bottom / 100% 2px no-repeat #47596a; }
.tray { display: flex; align-items: center; gap: 5px; }
.tray svg { width: 14px; height: 14px; }
.ime { font-size: 12px; font-weight: 500; }
.clock { width: 62px; display: flex; flex-direction: column; justify-content: center; align-items: center; line-height: 14px; }
.notif { width: 24px; display: grid; place-items: center; }
.notif svg { width: 15px; height: 15px; }
.peek { width: 15px; }
</style>
